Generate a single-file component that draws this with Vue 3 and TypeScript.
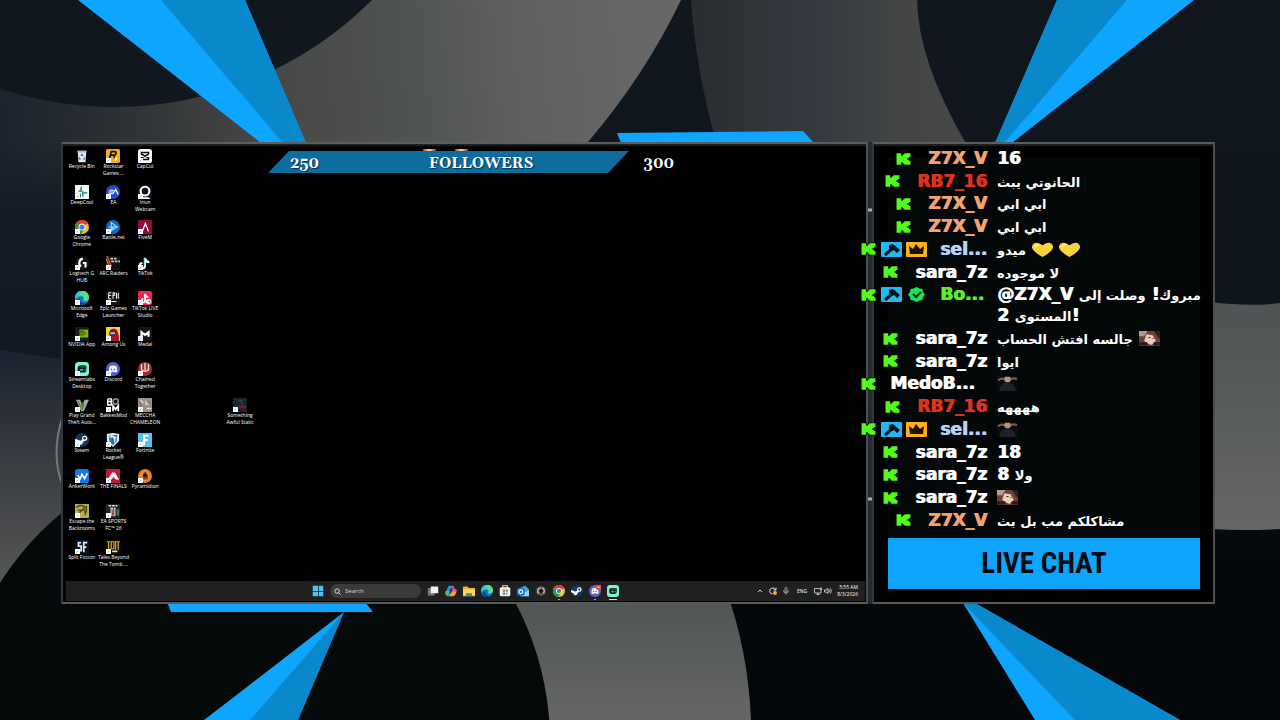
<script setup lang="ts">
interface Shortcut { name: string; art: string; row: number; col: number }
interface Message {
  user: string
  color: string
  badges?: string[]
  clipped?: boolean
  lines?: string[]
  emotes?: string[]
}

const box = (fill: string, r = 0) => `<rect width="16" height="16" rx="${r}" fill="${fill}"/>`
const disc = (fill: string) => `<circle cx="8" cy="8" r="8" fill="${fill}"/>`

const chrome =
  '<circle cx="8" cy="8" r="8" fill="#fbc116"/><path d="M8 8L1 4a8 8 0 0 1 14 0z" fill="#e33b2e"/><path d="M8 8L1 4a8 8 0 0 0 6 12l4-6z" fill="#229a48"/><circle cx="8" cy="8" r="4" fill="#fff"/><circle cx="8" cy="8" r="3" fill="#3b7ded"/>'
const edge =
  '<circle cx="8" cy="8" r="8" fill="#1477c9"/><path d="M0 8A8 8 0 0 1 16 7c0 4-4 5-7 4 2-2 1-5-2-5C4 6 1 8 0 10z" fill="#35c8c2"/><path d="M8 0c5 0 8 3 8 7 0 4-4 5-7 4 3-2 1-6-4-7z" fill="#5ddc8a"/><path d="M6 8c-2 4 2 7 7 6-5 4-11 1-10-4z" fill="#0b3f86"/>'
const streamlabs =
  box('#80f5d2', 4) +
  '<rect x="3" y="4" width="10" height="8" rx="3" fill="#0b241f"/><path d="M6 9h3M11 9h1" stroke="#80f5d2" stroke-width="1.5"/><path d="M6 4h7v3H6z" fill="#174b40"/>'
const discord =
  disc('#5560dc') +
  '<path d="M4 5q4-2 8 0l1 6-3 1-1-1H7l-1 1-3-1z" fill="#fff"/><circle cx="6.300" cy="8.500" r="1" fill="#5560dc"/><circle cx="9.700" cy="8.500" r="1" fill="#5560dc"/>'
const steam =
  disc('#12375f') +
  '<path d="M0 8l7 3 4-5" stroke="#fff" stroke-width="3" fill="none"/><circle cx="11" cy="6" r="3" fill="#fff"/><circle cx="11" cy="6" r="1.500" fill="#12375f"/><circle cx="6" cy="11" r="2.500" fill="#fff"/>'

const grid: [string, string][][] = [
  [
    ['Recycle Bin', '<path d="M3 2h10l-1 13H4z" fill="#dce8f2"/><path d="M3 2h10v2H3z" fill="#aebfcc"/><path d="M8 5l2 3H6zM5 9l2 3H4zM11 9l1 3H9z" fill="#2573c9"/>'],
    ['Rockstar Games ...', box('#f4ae1b', 2) + '<path d="M4 12L6 3h4q3 1 0 4H6m3 0l1 4" stroke="#17130a" stroke-width="2" fill="none"/><path d="M9 10h5l-4 4 1-5 2 5z" fill="#fff"/>'],
    ['CapCut', box('#fff', 3) + '<path d="M12 6V4H4v2l8 4v2H4v-2l8-4" stroke="#0a0a0a" stroke-width="1.800" fill="none"/>'],
  ],
  [
    ['DeepCool', box('#f1f7f5') + '<path d="M7 2v5H4M9 7v6M10 9h4M6 10v4" stroke="#16836e" stroke-width="1.600" fill="none"/>'],
    ['EA', disc('#2549cf') + '<path d="M4 6h5M3 8h5M3 10h5l3-5 3 6" stroke="#fff" stroke-width="1.300" fill="none"/>'],
    ['Iriun Webcam', '<rect width="16" height="16" fill="#07101f"/><circle cx="8" cy="7" r="5" fill="none" stroke="#fff" stroke-width="2.500"/><path d="M5 14h7l2 2H4z" fill="#fff"/>'],
  ],
  [
    ['Google Chrome', chrome],
    ['Battle.net', disc('#1267bd') + '<path d="M6 3l7 5-7 4zM3 8h8M6 13l4-8" stroke="#8fe0ff" stroke-width="1.300" fill="none"/>'],
    ['FiveM', box('#8e0d3d', 1) + '<path d="M8 3l4 10M8 5l-3 8" stroke="#fff" stroke-width="1.500"/>'],
  ],
  [
    ['Logitech G HUB', disc('#151515') + '<path d="M9 3a5 5 0 0 0-2 9M9 8h3v5" stroke="#fff" stroke-width="2.500" fill="none"/>'],
    ['ARC Raiders', box('#141219') + '<path d="M1 0l5 12" stroke="#d74836" stroke-width="2"/><path d="M0 3l4 10" stroke="#e3cb4c" stroke-width="1"/><path d="M5 3h8M6 6h10" stroke="#ccc" stroke-width="2" stroke-dasharray="3 1"/>'],
    ['TikTok', '<path d="M8 2v9a3 3 0 1 1-3-3M8 3q1 4 5 4" stroke="#fff" stroke-width="2.400" fill="none"/><path d="M7 2v9" stroke="#29d3d8"/>'],
  ],
  [
    ['Microsoft Edge', edge],
    ['Epic Games Launcher', box('#151515', 1) + '<path d="M6 2H3v7h3M3 5h3M8 9V2h2v3H8M12 2v7M15 3h-1v5h1M6 12h6" stroke="#fff" stroke-width="1.100" fill="none"/>'],
    ['TikTok LIVE Studio', box('#f32255', 2) + '<path d="M8 3v8a2 2 0 1 1-2-2M8 4q1 3 4 3" stroke="#fff" stroke-width="2" fill="none"/><circle cx="12" cy="12" r="3" fill="#fff"/><path d="M11 11h3v3z" fill="#e54"/>'],
  ],
  [
    ['NVIDIA App', box('#191d17') + '<rect x="5" y="3" width="10" height="9" fill="#76b900"/><path d="M3 7q5-5 9 0-4 4-7 1 2-3 5-1" stroke="#1e3800" fill="none"/>'],
    ['Among Us', box('#f5cf48') + '<path d="M4 16V7q0-6 6-5 5 1 5 14z" fill="#a71624"/><rect x="4" y="5" width="7" height="4" rx="2" fill="#8db9cf" stroke="#261018"/>'],
    ['Medal', box('#151719', 2) + '<path d="M4 11V6l4 3 4-3v5" stroke="#fff" stroke-width="2.500" fill="none"/>'],
  ],
  [
    ['Streamlabs Desktop', streamlabs],
    ['Discord', discord],
    ['Chained Together', disc('#9a332d') + '<path d="M4 2v7q4 3 8 0V2M8 1v8" stroke="#e8d7cf" stroke-width="1.600" fill="none"/>'],
  ],
  [
    ['Play Grand Theft Auto...', '<path d="M1 2h5l2 7 3-7h5l-6 13H7z" fill="#a3aba0"/><path d="M7 4l4 3-3 7z" fill="#487c3b"/><path d="M3 3l5 10" stroke="#4b5a48"/>'],
    ['BakkesMod', '<path d="M2 1v7h4V1H2m0 3h4" stroke="#fff" stroke-width="1.600" fill="none"/><circle cx="11" cy="4" r="3" fill="none" stroke="#888" stroke-width="2"/><path d="M8 15V9l3 4 3-4v6" stroke="#fff" stroke-width="2" fill="none"/>'],
    ['MECCHA CHAMELEON', box('#9b8d87') + '<path d="M9 3v4h4M3 2l3 4M10 12h5" stroke="#e3d8d3" stroke-width="1.500" fill="none"/><path d="M2 5l3 8M12 3l2 5" stroke="#665b58"/>'],
  ],
  [
    ['Steam', steam],
    ['Rocket League®', '<path d="M1 1l7-1 7 1v8l-7 7-7-7z" fill="#e5f1fb"/><path d="M3 3l10-1-1 8-4 4-4-4z" fill="#2473bf"/><path d="M4 5q5-2 8 1M6 3q5 2 4 8" stroke="#fff" stroke-width="1.300" fill="none"/>'],
    ['Fortnite', box('#59c2ee') + '<path d="M7 14V3h5M7 8h4" stroke="#fff" stroke-width="2.200" fill="none"/>'],
  ],
  [
    ['AnkerWork', box('#1877ed', 3) + '<path d="M3 7l3 4 2-5 3 5 3-6" stroke="#fff" stroke-width="1.800" fill="none"/>'],
    ['THE FINALS', box('#c1163f') + '<path d="M2 12L7 4h3l5 8h-4l-2-3-3 3z" fill="#fff"/>'],
    ['Pyramidion', disc('#df7b2d') + '<circle cx="8" cy="8" r="6" fill="#e8933a"/><path d="M8 3q5 3 3 9H6Q4 6 8 3z" fill="#843a1c"/><circle cx="8" cy="7" r="2" fill="#28160c"/>'],
  ],
  [
    ['Escape the Backrooms', box('#b9ad4d') + '<path d="M1 4q7-5 12 1M3 7h8l1 6M5 10l6-6M13 2v8" stroke="#4b4520" stroke-width="1.500" fill="none"/>'],
    ['EA SPORTS FC™ 26', box('#202124') + '<path d="M3 2h10M5 5h6" stroke="#eee" stroke-width="1.500" stroke-dasharray="3 1"/><path d="M5 6h6v8H5z" fill="#a6aaad"/><path d="M12 6h3v7h-3z" fill="#397951"/><path d="M8 7v6" stroke="#b23742" stroke-width="2"/>'],
  ],
  [
    ['Split Fiction', box('#0c1226') + '<path d="M7 3H4v4h3v5H3M10 14V3h4M10 8h3" stroke="#dfe9fa" stroke-width="2" fill="none"/>'],
    ['Tales Beyond The Tomb ...', box('#0c0a04') + '<path d="M1 2h4M3 2v9M6 2h3v8H6zM10 2h6M11 2v9M14 2v9" stroke="#d3a92b" stroke-width="1.400" fill="none"/><path d="M7 13h6" stroke="#ddd" stroke-width="2"/>'],
  ],
]

const shortcuts: Shortcut[] = grid.flatMap((items, r) =>
  items.map(([name, art], c) => ({ name, art, row: r + 1, col: c + 1 })),
)
shortcuts.push({
  name: 'Something Awful Static',
  art: box('#182529') + '<path d="M10 3l4 10H8z" fill="#591326"/><path d="M7 10h8" stroke="#842039" stroke-width="2"/><path d="M6 3h4v5" stroke="#2e4448" stroke-width="2" fill="none"/>',
  row: 8,
  col: 6,
})

const pinned: { name: string; art: string; state?: string }[] = [
  { name: 'Task view', art: '<rect x="1" y="4" width="9" height="10" fill="#777"/><rect x="5" y="2" width="10" height="9" fill="#f1f1f1"/>' },
  { name: 'Copilot', art: '<path d="M5 1h6l-4 14H4Q0 13 1 9z" fill="#2c8ee3"/><path d="M10 1q2 0 3 4 4 0 2 5-2 5-6 5H6l4-10z" fill="#e2577b"/><path d="M2 8h4l-2 7q-5-1-3-7z" fill="#54c46a"/><path d="M9 9h6q-1 5-4 6H6z" fill="#eda43c"/><path d="M7 5h3L8 11H6z" fill="#311b52"/>' },
  { name: 'File Explorer', art: '<path d="M0 2h6l2 2h8v11H0z" fill="#eeb332"/><path d="M0 6h16v8H0z" fill="#ffd75d"/><path d="M4 11h8v4H4z" fill="#2689d5"/>' },
  { name: 'Edge', art: edge },
  { name: 'Store', art: '<path d="M5 4V1h6v3" stroke="#ddd" stroke-width="1.500" fill="none"/><rect x="1" y="3" width="14" height="12" rx="2" fill="#f4f4f4"/><path d="M5 6h3v3H5z" fill="#e85e31"/><path d="M9 6h3v3H9z" fill="#61a43e"/><path d="M5 10h3v3H5z" fill="#2e95da"/><path d="M9 10h3v3H9z" fill="#e9b33c"/>' },
  { name: 'Outlook', art: '<path d="M4 4l7-3 5 5v9H4z" fill="#3fa9e6"/><path d="M8 11l8-4v8H6z" fill="#8fd8fa"/><rect y="4" width="10" height="10" rx="2" fill="#1173c8"/><circle cx="5" cy="9" r="2.500" fill="none" stroke="#fff" stroke-width="1.500"/>' },
  { name: 'Recorder', art: '<path d="M8 1l6 3v8l-6 3-6-3V4z" fill="#555"/><path d="M5 11a4 4 0 0 1 3-7M9 4a4 4 0 0 1 2 7" stroke="#ccc" stroke-width="1.500" fill="none"/><circle cx="8" cy="8" r="2.500" fill="#151515"/>' },
  { name: 'Chrome', art: chrome, state: 'open' },
  { name: 'Steam', art: steam },
  { name: 'Discord', art: discord + '<circle cx="13" cy="3" r="4" fill="#e14a55"/><path d="M11 3h4" stroke="#fff"/>', state: 'open' },
  { name: 'Streamlabs', art: streamlabs, state: 'active' },
]

const tray = [
  { name: 'Show hidden icons', art: '<path d="M4 10l4-4 4 4" stroke="#eee" stroke-width="1.800" fill="none"/>' },
  { name: 'Updates', art: '<path d="M13 6A6 6 0 1 0 7 14M14 1v5H9" stroke="#eee" stroke-width="1.800" fill="none"/><circle cx="12" cy="12" r="4" fill="#f2ad32"/>' },
  { name: 'Microphone', art: '<rect x="6" y="1" width="4" height="9" rx="2" stroke="#ddd" fill="none" stroke-width="1.300"/><path d="M3 7q0 5 5 5t5-5M8 12v3" stroke="#ddd" fill="none" stroke-width="1.300"/>' },
]

const messages: Message[] = [
  { user: 'Z7X_V', color: 'orange', lines: ['16'] },
  { user: 'RB7_16', color: 'red', lines: ['الحانوتي يبث'] },
  { user: 'Z7X_V', color: 'orange', lines: ['ابي ابي'] },
  { user: 'Z7X_V', color: 'orange', lines: ['ابي ابي'] },
  { user: 'sel...', color: 'blue', badges: ['mod', 'host'], clipped: true, lines: ['ميدو'], emotes: ['heart', 'heart'] },
  { user: 'sara_7z', color: 'white', lines: ['لا موجوده'] },
  { user: 'Bo...', color: 'green', badges: ['mod', 'verified'], clipped: true, lines: ['@Z7X_V مبروك! وصلت إلى', 'المستوى 2!'] },
  { user: 'sara_7z', color: 'white', lines: ['جالسه افتش الحساب'], emotes: ['cat'] },
  { user: 'sara_7z', color: 'white', lines: ['ايوا'] },
  { user: 'MedoB...', color: 'white', clipped: true, emotes: ['man'] },
  { user: 'RB7_16', color: 'red', lines: ['ههههه'] },
  { user: 'sel...', color: 'blue', badges: ['mod', 'host'], clipped: true, emotes: ['man'] },
  { user: 'sara_7z', color: 'white', lines: ['18'] },
  { user: 'sara_7z', color: 'white', lines: ['ولا 8'] },
  { user: 'sara_7z', color: 'white', emotes: ['cat'] },
  { user: 'Z7X_V', color: 'orange', lines: ['مشاكلكم مب بل بث'] },
]

const arabic = /[\u0600-\u06FF]/
const parts = (line: string) =>
  line
    .split(/([\u0600-\u06FF]+(?: [\u0600-\u06FF]+)*|!)/)
    .filter(Boolean)
    .map((text) => ({ text, ar: arabic.test(text) }))

const badgeArt: Record<string, string> = {
  mod: '<rect width="21" height="15" rx="1" fill="#22b9f2"/><path d="M4 13l8-7" stroke="#07141b" stroke-width="3"/><path d="M8 3l4-1 7 6-3 3-3-3-2 1-3-3z" fill="#07141b"/>',
  host: '<rect width="21" height="15" rx="1" fill="#fbb117"/><path d="M3 4l4 3 3-5 4 5 4-3-1 8H4z" fill="#1b1302"/>',
  verified: '<path d="M10.500 0l3 1.500 3 .5.500 3 2 2.500-2 2.500-.5 3-3 .5-3 1.500-3-1.500-3-.5-.5-3-2-2.500 2-2.500.5-3 3-.5z" fill="#1fe05a"/><path d="M7 7l3 3 5-5" stroke="#052b10" stroke-width="2" fill="none"/>',
}
const emoteArt: Record<string, string> = {
  heart: '<path d="M10 14Q-1 8 0 4 2-2 10 3q8-5 10 1 1 4-10 10z" fill="#f8d33a"/><path d="M3 5q1-3 4-2" stroke="#fff0a0" stroke-width="1.500" fill="none"/>',
  cat: '<rect width="20" height="14" fill="#6d4138"/><path d="M0 0h8l-3 5H0z" fill="#aaa092"/><path d="M14 0h6v8z" fill="#2e2022"/><path d="M5 9l2-6 6 1 3 5-4 4-5-2z" fill="#edcdb9"/><path d="M0 12h8M14 12h6" stroke="#34191a" stroke-width="3"/><path d="M9 6h2M13 7h1" stroke="#462622"/>',
  man: '<rect width="20" height="14" fill="#0a0b0d"/><path d="M1 4q4-3 8 0M11 4q4-3 8-1" stroke="#7d5a4b" stroke-width="2" fill="none"/><ellipse cx="10" cy="3" rx="3" ry="3" fill="#c08f77"/><path d="M2 14q1-8 8-8t8 8z" fill="#202127"/><path d="M7 1q3-2 6 0z" fill="#2b1b18"/>',
}
</script>

<template>
  <main class="scene">
    <svg class="backdrop" viewBox="0 0 1280 720" preserveAspectRatio="none" aria-hidden="true">
      <defs>
        <linearGradient id="night" x1="0" y1="0" x2="0" y2="1">
          <stop offset="0" stop-color="#10171e" />
          <stop offset="0.500" stop-color="#0d141b" />
          <stop offset="0.800" stop-color="#04080a" />
          <stop offset="1" stop-color="#030709" />
        </linearGradient>
        <linearGradient id="ring" gradientUnits="userSpaceOnUse" x1="0" y1="120" x2="640" y2="60">
          <stop offset="0" stop-color="#1c242e" />
          <stop offset="0.120" stop-color="#272c32" />
          <stop offset="0.250" stop-color="#343739" />
          <stop offset="0.400" stop-color="#464646" />
          <stop offset="0.660" stop-color="#515554" />
          <stop offset="0.820" stop-color="#606060" />
          <stop offset="1" stop-color="#676767" />
        </linearGradient>
        <linearGradient id="side" x1="0" y1="0" x2="0" y2="1">
          <stop offset="0" stop-color="#1b2230" />
          <stop offset="0.500" stop-color="#3c3f43" />
          <stop offset="1" stop-color="#5b5b5b" />
        </linearGradient>
        <linearGradient id="edgeShade" x1="0" y1="0" x2="0" y2="1">
          <stop offset="0" stop-color="#141c26" stop-opacity="0" />
          <stop offset="0.300" stop-color="#141c26" />
          <stop offset="1" stop-color="#101822" />
        </linearGradient>
        <linearGradient id="band">
          <stop offset="0" stop-color="#2a2e31" />
          <stop offset="0.450" stop-color="#343a41" />
          <stop offset="0.750" stop-color="#434545" />
          <stop offset="1" stop-color="#484848" />
        </linearGradient>
        <linearGradient id="lower" x1="0" y1="0" x2="0" y2="1">
          <stop offset="0" stop-color="#4e5353" />
          <stop offset="1" stop-color="#666" />
        </linearGradient>
      </defs>
      <rect width="1280" height="720" fill="url(#night)" />
      <path d="M0 0H681Q645 75 588 142V200H64V360H0z" fill="url(#ring)" />
      <path d="M0 142H64V360H0z" fill="url(#edgeShade)" />
      <circle cx="114" cy="-257" r="364" fill="#10171e" />
      <path d="M0 350Q30 354 64 360V600H0z" fill="url(#side)" />
      <path d="M691 0Q696 70 716 142H965Q918 60 917 0z" fill="url(#band)" />
      <path d="M1210 302Q1250 307 1280 303V529Q1245 531 1210 529z" fill="url(#lower)" />
      <path d="M500 590H726Q748 650 751 720H500z" fill="url(#lower)" />
      <circle cx="252" cy="742" r="298" fill="#04090a" />
      <path d="M63 415Q50 455 63 486" fill="none" stroke="#777" stroke-width="2" />
      <path d="M866 142h8v462h-8z" fill="#252a31" />
      <path d="M866 210h8M866 499h8" stroke="#aaa" stroke-width="3" />
      <g fill="#0ea5ff">
        <path d="M78 0h167l61 143h-45zM1057 0h137L1012 143h-17z" />
        <path d="M617 133l186-2 11 12H621zM167 602h198l8 10H171z" />
        <path d="M344 612L204 720h94zM963 603h12l205 117h-145z" />
      </g>
      <g fill="#0a88cc">
        <path d="M161 0h84l61 143h-23zM1057 0h70l-123 143h-9z" />
        <path d="M344 612l-94 108h48zM963 603h12l205 117h-105z" />
      </g>
    </svg>

    <section class="panel screen" aria-label="Desktop">
      <div class="desktop">
        <button
          v-for="s in shortcuts"
          :key="s.name"
          class="shortcut"
          :style="{ gridRow: s.row, gridColumn: s.col }"
        >
          <span class="picture">
            <svg viewBox="0 0 16 16" aria-hidden="true" v-html="s.art"></svg>
            <svg v-if="s.name !== 'Recycle Bin'" class="link-mark" viewBox="0 0 6 6" aria-hidden="true">
              <path d="M0 0h6v6H0z" fill="#fff" />
              <path d="M2 4l2-2" stroke="#5a9bd0" fill="none" />
            </svg>
          </span>
          <span class="caption">{{ s.name }}</span>
        </button>
      </div>

      <div class="goal">
        <div class="goal-bar"></div>
        <i class="spark first"></i>
        <i class="spark second"></i>
        <span>250</span>
        <strong>FOLLOWERS</strong>
        <span>300</span>
      </div>

      <footer class="taskbar">
        <div class="apps">
          <button class="app" aria-label="Start">
            <svg viewBox="0 0 16 16"><path d="M1 1h7v7H1zM9 1h6v7H9zM1 9h7v6H1zM9 9h6v6H9z" fill="#4cc4f2" /></svg>
          </button>
          <label class="search">
            <svg viewBox="0 0 16 16" aria-hidden="true"><circle cx="7" cy="7" r="5" fill="none" stroke="#eee" stroke-width="2" /><path d="M10 10l5 5" stroke="#eee" stroke-width="2" /></svg>
            <input type="search" placeholder="Search" aria-label="Search" />
          </label>
          <button v-for="a in pinned" :key="a.name" class="app" :class="a.state" :aria-label="a.name">
            <svg viewBox="0 0 16 16" v-html="a.art"></svg>
          </button>
        </div>
        <div class="tray">
          <button v-for="t in tray" :key="t.name" :aria-label="t.name">
            <svg viewBox="0 0 16 16" v-html="t.art"></svg>
          </button>
          <span class="lang">ENG</span>
          <button class="status" aria-label="Network and volume">
            <svg viewBox="0 0 16 16"><path d="M10 3H1v9h13V7M5 15h6M8 12v3M12 2h3v4h-3z" stroke="#eee" stroke-width="1.500" fill="none" /></svg>
            <svg viewBox="0 0 16 16"><path d="M1 6h3l4-3v10l-4-3H1zM10 5q2 3 0 6M13 3q3 5 0 10" stroke="#eee" stroke-width="1.500" fill="none" /></svg>
          </button>
          <time class="clock"><span>5:55 AM</span><span>8/3/2026</span></time>
        </div>
      </footer>
    </section>

    <section class="panel chat" aria-label="Live chat">
      <ul class="messages">
        <li v-for="(m, i) in messages" :key="i" class="message">
          <span class="who" :class="{ clipped: m.clipped }">
            <svg class="kick" viewBox="-1 -1 11 11" preserveAspectRatio="none" aria-label="Kick">
              <path d="M0 0h3v2h1V1h1V0h4v3H8v1H7v1h1v1h1v3H5V8H4V7H3v2H0z" fill="#53fc18" stroke="#000" paint-order="stroke" />
            </svg>
            <svg v-for="b in m.badges" :key="b" class="badge" viewBox="0 0 21 15" v-html="badgeArt[b]"></svg>
            <b class="user" :class="m.color">{{ m.user }}</b>
          </span>
          <span class="body">
            <span v-for="line in m.lines" :key="line" class="line"><span v-for="(p, k) in parts(line)" :key="k" :class="p.ar ? 'ar' : 'latin'">{{ p.text }}</span></span>
            <svg v-for="(e, n) in m.emotes" :key="n" class="emote" viewBox="0 0 20 14" preserveAspectRatio="none" v-html="emoteArt[e]"></svg>
          </span>
        </li>
      </ul>
      <h1 class="title">LIVE CHAT</h1>
    </section>
  </main>
</template>

<style>
html,
body {
  margin: 0;
  background: #04090c;
}
</style>

<style scoped>
* {
  box-sizing: border-box;
}
button {
  padding: 0;
  border: 0;
  background: none;
  color: inherit;
  font: inherit;
}
svg {
  display: block;
}
.scene {
  position: relative;
  display: grid;
  grid-template-columns: 61fr 807fr 4fr 343fr 65fr;
  grid-template-rows: 142fr 462fr 116fr;
  height: 100vh;
  overflow: hidden;
  color: #fff;
  font-family: "Open Sans", "Noto Sans", sans-serif;
}
.backdrop {
  position: absolute;
  inset: 0;
  width: 100%;
  height: 100%;
}
.panel {
  position: relative;
  grid-row: 2;
  display: flex;
  flex-direction: column;
  min-width: 0;
  min-height: 0;
  border: 2px solid;
  border-color: #5c5e5e #4a4f52 #565a5a #33383d;
  background: #000;
  box-shadow: inset 0 2px 1px #1d2022;
}
.screen {
  grid-column: 2;
  padding: 3px 1px 1px 3px;
}
.desktop {
  flex: 1;
  display: grid;
  grid-template-columns: repeat(6, 1fr);
  grid-template-rows: repeat(12, minmax(0, 1fr));
  width: 190px;
  min-height: 0;
  padding: 2px 0 6px;
}
.shortcut {
  display: flex;
  flex-direction: column;
  align-items: center;
  font-size: 5px;
  line-height: 7px;
  text-align: center;
}
.picture {
  position: relative;
  flex: none;
  width: 14px;
  height: 14px;
}
.link-mark {
  position: absolute;
  left: 0;
  bottom: 0;
  width: 5px;
  height: 5px;
}
.goal {
  position: absolute;
  top: 7px;
  left: 205px;
  display: flex;
  align-items: center;
  justify-content: space-between;
  width: 406px;
  height: 22px;
  padding: 3px 0 0 22px;
  font-family: Georgia, Gelasio, "Liberation Serif", serif;
  font-size: 15px;
  font-weight: 700;
  line-height: 22px;
  text-shadow: 1px 1px 1px #0008;
}
.goal span,
.goal strong {
  position: relative;
}
.goal-bar {
  position: absolute;
  inset: 0 45px 0 0;
  background: #0d6d9f;
  clip-path: polygon(21px 0, 100% 0, calc(100% - 21px) 100%, 0 100%);
}
.spark {
  position: absolute;
  top: -2px;
  width: 13px;
  height: 2px;
  background: linear-gradient(90deg, #8d3b46, #d9a04d, #eee0a0, #d9774d, #8d3b66);
}
.first {
  left: 155px;
}
.second {
  left: 187px;
}
.taskbar {
  display: grid;
  grid-template-columns: 1fr auto 1fr;
  align-items: center;
  height: 20px;
  background: #202020;
}
.apps {
  grid-column: 2;
  display: flex;
  align-items: center;
  gap: 6px;
}
.app {
  position: relative;
  width: 12px;
  height: 12px;
}
.app.open::after,
.app.active::after {
  content: "";
  position: absolute;
  left: 5px;
  bottom: -3px;
  width: 2px;
  height: 1px;
  background: #aaa;
}
.app.active::after {
  left: 2px;
  width: 8px;
  background: #ddd;
}
.search {
  display: flex;
  align-items: center;
  gap: 4px;
  width: 91px;
  height: 14px;
  padding: 0 4px;
  border-radius: 7px;
  background: #3a3a3a;
}
.search svg {
  flex: none;
  width: 7px;
  height: 7px;
}
.search input {
  width: 100%;
  min-width: 0;
  padding: 0;
  border: 0;
  outline: 0;
  background: none;
  color: #eee;
  font: 6px/12px "Open Sans", sans-serif;
}
.search input::placeholder {
  color: #ddd;
}
.tray {
  display: flex;
  align-items: center;
  justify-content: flex-end;
  gap: 5px;
  padding-right: 7px;
  font-size: 5px;
  line-height: 7px;
}
.tray button {
  display: flex;
  gap: 2px;
}
.tray svg {
  width: 8px;
  height: 8px;
}
.lang {
  padding: 0 2px;
}
.clock {
  display: flex;
  flex-direction: column;
  text-align: right;
}
.chat {
  grid-column: 4;
  padding: 3px 13px 13px 14px;
}
.messages {
  flex: 1;
  display: flex;
  flex-direction: column;
  justify-content: space-between;
  min-height: 0;
  margin: 0;
  padding: 1px 0 7px;
  list-style: none;
  background: linear-gradient(#0000 10px, #030707 10px);
}
.message {
  display: flex;
  gap: 10px;
  margin-left: -28px;
  font-family: "DejaVu Sans", sans-serif;
  font-size: 17px;
  font-weight: 700;
  line-height: 21px;
  white-space: nowrap;
}
.who {
  flex: none;
  display: flex;
  align-items: center;
  justify-content: flex-end;
  width: 127px;
  height: 21px;
}
.who.clipped {
  justify-content: flex-start;
}
.kick {
  flex: none;
  width: 17px;
  height: 14px;
}
.badge {
  flex: none;
  width: 21px;
  height: 15px;
  margin-left: 4px;
}
.user,
.latin {
  text-shadow: 1px 0 0 currentColor;
}
.user {
  margin-left: 16px;
}
.clipped .user {
  margin-left: 13px;
}
.orange {
  color: #f2a374;
}
.red {
  color: #e0301e;
}
.blue {
  color: #b9d2f5;
}
.green {
  color: #5cf02c;
}
.body {
  display: flex;
  flex-wrap: wrap;
  align-items: center;
  column-gap: 6px;
  width: 214px;
}
.line {
  height: 21px;
  white-space: pre;
}
.ar {
  font-size: 13px;
}
.emote {
  width: 21px;
  height: 15px;
}
.title {
  flex: none;
  height: 51px;
  margin: 0;
  background: #0ea5ff;
  color: #050a10;
  font: 700 29px/51px "Roboto Condensed", "Liberation Sans Narrow", "DejaVu Sans Condensed", sans-serif;
  text-align: center;
}
</style>
